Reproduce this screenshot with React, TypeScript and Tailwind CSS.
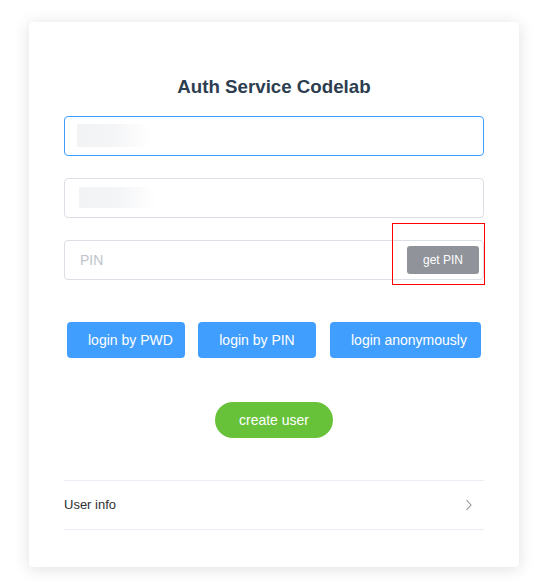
import React from "react";

export default function App() {
  const font = { fontFamily: '"Liberation Sans", Arial, sans-serif' };
  return (
    <div className="w-[550px] h-[585px] bg-white pt-[22px] pl-[29px]" style={font}>
      <div className="w-[490px] h-[545px] bg-white rounded-[4px] shadow-[0_2px_16px_rgba(0,0,0,0.13)] px-[35px] pt-[53px] flex flex-col">
        <h1 className="text-[18.72px] leading-[24px] font-bold text-[#2c3e50] text-center">Auth Service Codelab</h1>

        <div className="mt-[17px] h-[40px] border border-[#409eff] rounded-[4px] flex items-start pl-[12px] pt-[7px]">
          <div className="w-[73px] h-[23px] bg-gradient-to-r from-[#f2f3f5] via-[#f4f5f7] to-white" />
        </div>

        <div className="mt-[22px] h-[40px] border border-[#dcdfe6] rounded-[4px] flex items-start pl-[14px] pt-[8px]">
          <div className="w-[78px] h-[21px] bg-gradient-to-r from-[#f2f3f5] via-[#f4f5f7] to-white" />
        </div>

        <div className="relative mt-[22px] h-[40px] border border-[#dcdfe6] rounded-[4px] flex items-center justify-between pl-[15px] pr-[4px]">
          <span className="text-[14px] text-[#c0c4cc]">PIN</span>
          <button className="w-[72px] h-[28px] bg-[#909399] rounded-[3px] text-white text-[12px] flex items-center justify-center">get PIN</button>
          <div className="absolute left-[327px] top-[-18px] w-[93px] h-[62px] border border-[#ff0000] pointer-events-none" />
        </div>

        <div className="mt-[42px] flex pl-[3px]">
          <button className="w-[118px] h-[36px] bg-[#409eff] rounded-[4px] text-white text-[14px] flex items-center pl-[21px]">login by PWD</button>
          <button className="ml-[13px] w-[118px] h-[36px] bg-[#409eff] rounded-[4px] text-white text-[14px] flex items-center justify-center">login by PIN</button>
          <button className="ml-[14px] w-[151px] h-[36px] bg-[#409eff] rounded-[4px] text-white text-[14px] flex items-center pl-[21px]">login anonymously</button>
        </div>

        <div className="mt-[44px] flex justify-center">
          <button className="w-[118px] h-[36px] bg-[#67c23a] rounded-full text-white text-[14px] flex items-center justify-center">create user</button>
        </div>

        <div className="mt-[42px] h-[50px] border-t border-b border-[#ebeef5] flex items-center justify-between">
          <span className="text-[13px] text-[#303133]">User info</span>
          <svg width="8" height="12" viewBox="0 0 8 12" className="mr-[11px]">
            <polyline points="1.5,1 6,6 1.5,11" fill="none" stroke="#909399" strokeWidth="1.1" />
          </svg>
        </div>
      </div>
    </div>
  );
}
